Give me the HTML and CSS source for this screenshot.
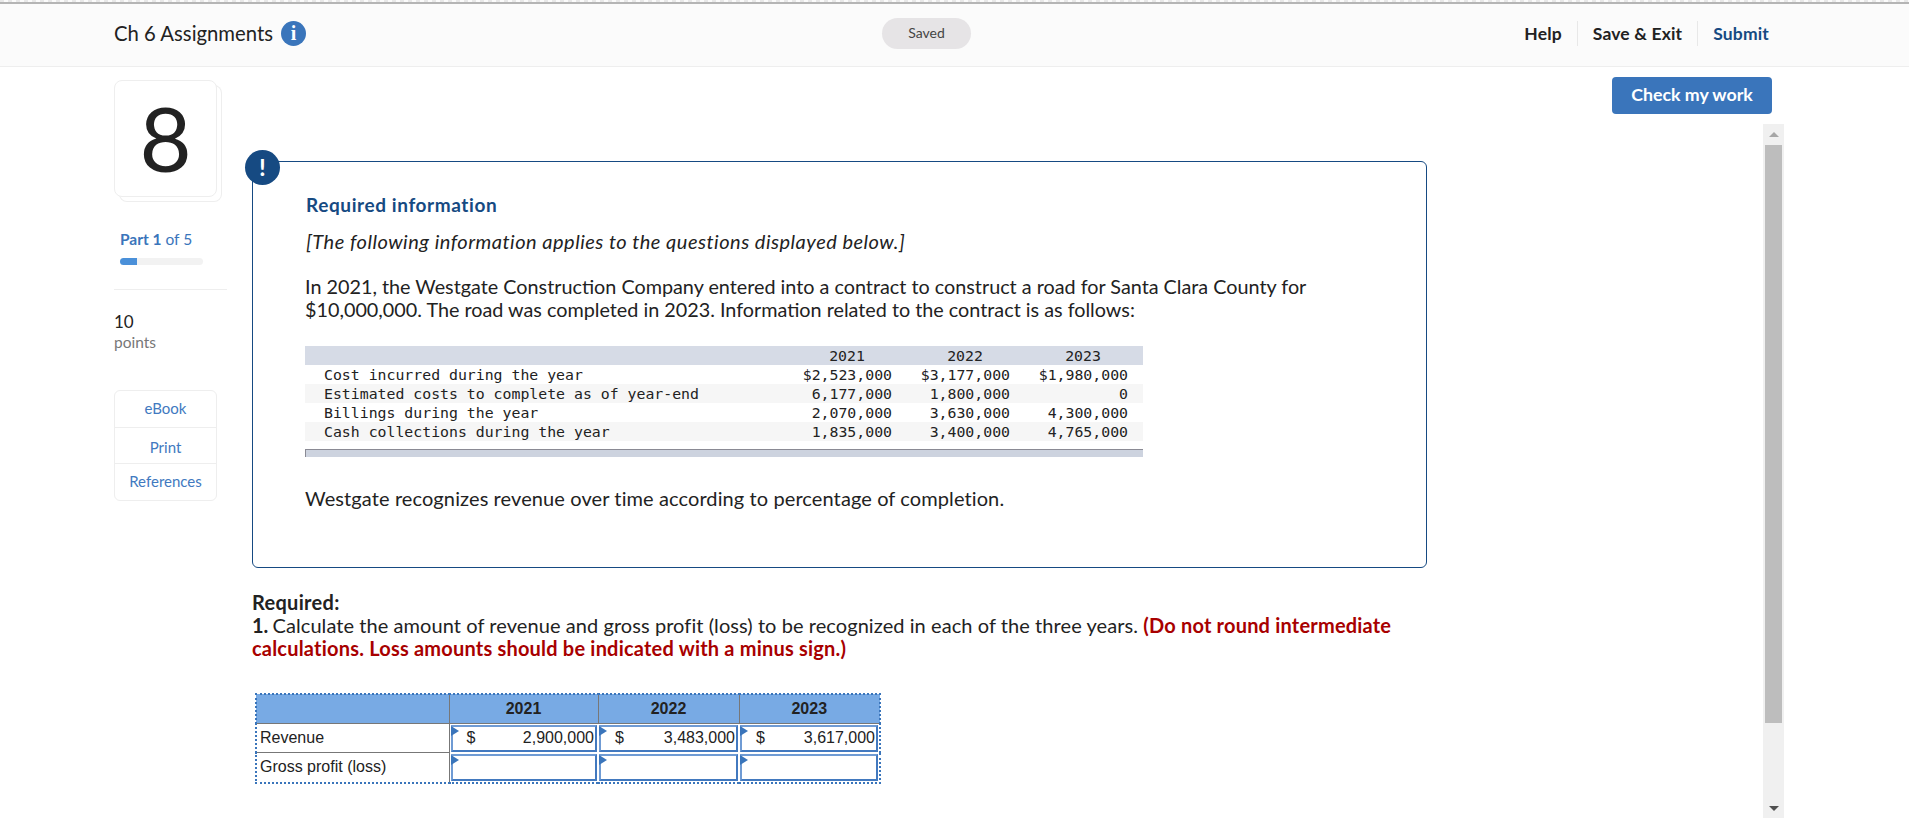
FILE: index.html
```html
<!DOCTYPE html>
<html lang="en">
<head>
<meta charset="utf-8">
<title>Ch 6 Assignments</title>
<link rel="stylesheet" href="styles.css">
</head>
<body>
<div class="topline"></div>
<header class="hdr">
  <div class="hdr-left">
    <span class="title">Ch 6 Assignments</span>
    <span class="info">i</span>
  </div>
  <div class="hdr-mid"><span class="saved">Saved</span></div>
  <nav class="hdr-nav">
    <a class="nav-item">Help</a>
    <a class="nav-item">Save &amp; Exit</a>
    <a class="nav-item nav-submit">Submit</a>
  </nav>
</header>
<div class="page">
  <aside class="side">
    <div class="qcard"><div class="qnum">8</div></div>
    <div class="part"><b>Part 1</b> of 5</div>
    <div class="progress"><div class="progress-fill"></div></div>
    <div class="side-rule"></div>
    <div class="points-num">10</div>
    <div class="points-label">points</div>
    <div class="tools">
      <a class="tool tool-a">eBook</a>
      <a class="tool tool-b">Print</a>
      <a class="tool tool-c">References</a>
    </div>
  </aside>
  <main class="main">
    <section class="card">
      <span class="badge">!</span>
      <h2 class="card-title">Required information</h2>
      <p class="card-note">[The following information applies to the questions displayed below.]</p>
      <p class="card-text">In 2021, the Westgate Construction Company entered into a contract to construct a road for Santa Clara County for $10,000,000. The road was completed in 2023. Information related to the contract is as follows:</p>
      <div class="data">
        <div class="row row-head"><span></span><span class="yr">2021</span><span class="yr">2022</span><span class="yr">2023</span></div>
        <div class="row"><span>Cost incurred during the year</span><span class="n">$2,523,000</span><span class="n">$3,177,000</span><span class="n">$1,980,000</span></div>
        <div class="row row-alt"><span>Estimated costs to complete as of year-end</span><span class="n">6,177,000</span><span class="n">1,800,000</span><span class="n">0</span></div>
        <div class="row"><span>Billings during the year</span><span class="n">2,070,000</span><span class="n">3,630,000</span><span class="n">4,300,000</span></div>
        <div class="row row-alt"><span>Cash collections during the year</span><span class="n">1,835,000</span><span class="n">3,400,000</span><span class="n">4,765,000</span></div>
        <div class="data-foot"></div>
      </div>
      <p class="card-end">Westgate recognizes revenue over time according to percentage of completion.</p>
    </section>
    <section class="req">
      <div class="req-head">Required:</div>
      <div><b class="req-num">1.</b> Calculate the amount of revenue and gross profit (loss) to be recognized in each of the three years. <b class="red">(Do not round intermediate calculations. Loss amounts should be indicated with a minus sign.)</b></div>
    </section>
    <table class="ans">
      <colgroup><col class="c0"><col class="c1"><col class="c2"><col class="c3"></colgroup>
      <thead><tr><th></th><th>2021</th><th>2022</th><th>2023</th></tr></thead>
      <tbody>
        <tr><td class="lbl">Revenue</td>
          <td class="cell"><div class="inp"><span class="cur">$</span><span>2,900,000</span></div></td>
          <td class="cell"><div class="inp"><span class="cur">$</span><span>3,483,000</span></div></td>
          <td class="cell"><div class="inp"><span class="cur">$</span><span>3,617,000</span></div></td></tr>
        <tr><td class="lbl">Gross profit (loss)</td>
          <td class="cell"><div class="inp"></div></td>
          <td class="cell"><div class="inp"></div></td>
          <td class="cell"><div class="inp"></div></td></tr>
      </tbody>
    </table>
  </main>
  <div class="right">
    <button class="check">Check my work</button>
    <div class="sbar">
      <div class="sb-up"></div>
      <div class="sb-thumb"></div>
      <div class="sb-track"></div>
      <div class="sb-down"></div>
    </div>
  </div>
</div>
</body>
</html>
```

FILE: styles.css
```css
* { box-sizing: border-box; }
html, body { margin: 0; height: 100%; overflow: hidden; background: #fff; }
body { font-family: Lato, "Open Sans", sans-serif; color: #222; }

.topline { height: 4px; border-bottom: 2px solid #b5b5b5; background: repeating-linear-gradient(90deg, #e8e8e8 0 4px, #fbfbfb 4px 8px); }

.hdr { height: 63px; background: #fbfbfb; border-bottom: 1px solid #eeeeee; display: grid; grid-template-columns: 1fr 1fr 1fr; align-items: center; padding: 0 137px 4px 114px; }
.hdr-left { display: flex; align-items: center; gap: 8px; }
.title { font-size: 20.3px; color: #222; }
.info { width: 25px; height: 25px; border-radius: 50%; background: #3a75bb; color: #fff; font-family: "Liberation Serif", serif; font-weight: 700; font-size: 20px; line-height: 25px; text-align: center; }
.hdr-mid { display: flex; justify-content: center; padding-right: 33px; }
.saved { width: 89px; height: 31px; line-height: 30px; border-radius: 16px; background: #e6e4e6; color: #444; font-size: 14px; text-align: center; }
.hdr-nav { display: flex; justify-content: flex-end; align-items: center; }
.nav-item { font-size: 17.5px; line-height: 25px; font-weight: 700; letter-spacing: .15px; color: #222; padding: 0 15px; border-right: 1px solid #e8e8e8; }
.nav-item:last-child { border-right: 0; padding-right: 3px; }
.nav-submit { color: #164a82; }

.page { display: flex; height: 751px; }
.side { width: 252px; padding: 13px 0 0 114px; flex: none; }
.qcard { width: 103px; height: 117px; border: 1px solid #eee; border-radius: 8px; background: #fff; box-shadow: 5px 5px 0 -1px #fff, 5px 5px 0 0 #eee; display: flex; align-items: center; justify-content: center; padding-bottom: 4px; }
.qnum { font-size: 90px; line-height: 1; color: #222; font-weight: 400; }
.part { margin: 33px 0 0 6px; font-size: 15.5px; color: #3a75bb; }
.progress { margin: 10px 0 0 6px; width: 83px; height: 7px; border-radius: 4px; background: #f2f2f2; overflow: hidden; }
.progress-fill { width: 17px; height: 100%; background: #4a90d9; }
.side-rule { margin-top: 24px; width: 113px; border-top: 1px solid #eee; }
.points-num { margin-top: 21px; font-size: 17px; color: #222; }
.points-label { margin-top: 1px; font-size: 15.5px; color: #777; }
.tools { margin-top: 39px; width: 103px; border: 1px solid #eee; border-radius: 6px; display: flex; flex-direction: column; }
.tool { display: block; text-align: center; font-size: 15px; color: #4179c0; border-bottom: 1px solid #eee; }
.tool-a { height: 37px; line-height: 34px; }
.tool-b { height: 36px; line-height: 38px; }
.tool-c { height: 36px; line-height: 34px; border-bottom: 0; }

.main { width: 1175px; flex: none; padding-top: 94px; }
.card { position: relative; height: 407px; width: 1175px; border: 1px solid #164a82; border-radius: 6px; padding: 31px 52px 0 52px; }
.badge { position: absolute; left: -8px; top: -12px; width: 35px; height: 35px; border-radius: 50%; background: #164a82; color: #fff; font-weight: 900; font-size: 22px; line-height: 35px; text-align: center; }
.card-title { margin: 0 0 0 1px; font-size: 19px; line-height: 24px; letter-spacing: .6px; color: #164a82; font-weight: 700; }
.card-note { margin: 12px 0 0 1px; font-size: 20px; line-height: 24px; letter-spacing: .5px; font-style: italic; color: #222; }
.card-text { margin: 22px 0 0; font-size: 19.8px; line-height: 23px; color: #222; width: 1040px; }
.card-end { margin: 29px 0 0; font-size: 20px; line-height: 24px; letter-spacing: .1px; color: #222; }

.data { margin-top: 25px; width: 838px; font-family: "DejaVu Sans Mono", monospace; font-size: 14.83px; color: #222; }
.row { display: grid; grid-template-columns: 1fr 90px 90px 90px; column-gap: 28px; height: 19px; line-height: 19px; padding: 0 15px 0 19px; white-space: nowrap; }
.row-head { background: #d6dbe6; }
.row-alt { background: #f6f6f6; }
.yr { text-align: center; }
.n { text-align: right; }
.data-foot { margin-top: 8px; height: 8px; background: #cdd3df; border-top: 1px solid #8a8a94; border-left: 1px solid #8a8a94; }

.req { margin-top: 23px; font-size: 20px; line-height: 23px; letter-spacing: .07px; width: 1175px; color: #222; }
.req-head { font-weight: 700; letter-spacing: .3px; }
.req-num { letter-spacing: 0; margin-right: -1px; }
.red { color: #a80000; letter-spacing: .2px; }

.ans { margin: 33px 0 0 3px; width: 624px; border-collapse: collapse; table-layout: fixed; border: 2px dotted #3a75bb; font-family: "Liberation Sans", Arial, sans-serif; font-size: 16px; color: #222; }
.c0 { width: 193px; }
.c1 { width: 149px; }
.c2 { width: 141px; }
.c3 { width: 141px; }
.ans th { height: 29px; background: #78aae4; border: 1px solid #777; border-top: 0; font-weight: 700; padding: 0; }
.ans th:first-child { border-left: 0; }
.ans th:last-child { border-right: 0; }
.ans td { height: 29px; padding: 0; }
.lbl { border-bottom: 1px solid #777; border-right: 1px solid #777; padding-left: 3px !important; }
.ans tr:last-child .lbl { border-bottom: 0; }
.cell { position: relative; }
.inp { position: relative; height: 27px; margin: 1px; border: 2px solid #4279bf; border-top-color: #6f9bd4; border-left-color: #6f9bd4; background: #fff; display: flex; justify-content: space-between; align-items: center; padding: 0 1px 0 14px; }
.inp::before { content: ""; position: absolute; left: -2px; top: -1px; border-left: 8px solid #3a75bb; border-top: 5px solid transparent; border-bottom: 5px solid transparent; }

.right { flex: 1; position: relative; }
.check { position: absolute; left: 185px; top: 10px; width: 160px; height: 37px; border: 0; border-radius: 4px; background: #3a75bb; color: #fff; font-family: inherit; font-size: 17.8px; font-weight: 700; padding: 0 0 3px; }
.sbar { position: absolute; left: 336px; top: 57px; bottom: 0; width: 21px; background: #f0f0f0; display: flex; flex-direction: column; align-items: center; }
.sb-up { height: 21px; flex: none; position: relative; width: 100%; }
.sb-up::after { content: ""; position: absolute; left: 6px; top: 8px; border-left: 5px solid transparent; border-right: 5px solid transparent; border-bottom: 5px solid #a6a6a6; }
.sb-thumb { width: 17px; height: 578px; flex: none; background: #bdbdbd; }
.sb-track { flex: 1; }
.sb-down { height: 17px; flex: none; position: relative; width: 100%; }
.sb-down::after { content: ""; position: absolute; left: 6px; top: 5px; border-left: 5px solid transparent; border-right: 5px solid transparent; border-top: 5px solid #505050; }
```
